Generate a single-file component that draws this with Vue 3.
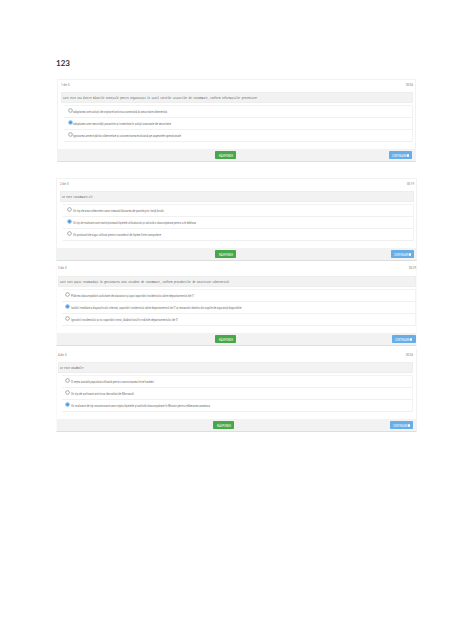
<script setup>
const cards = [
  {
    name: 'first', num: '1 din 5', time: '00:06', chosen: 1,
    question: 'Care este una dintre măsurile esențiale pentru organizații în cazul țintelor atacurilor de ransomware, conform informațiilor prezentate?', width: 194.5,
    options: [
      ['adoptarea unei soluții de criptare/antivirus conectată la securitate cibernetică', 94],
      ['adoptarea unei securități proactive și investirea în soluții avansate de securitate', 98],
      ['ignorarea amenințărilor cibernetice și concentrarea exclusivă pe aspectele operaționale', 108]
    ]
  },
  {
    name: 'second', num: '2 din 5', time: '00:19', chosen: 1,
    question: 'Ce este ransomware-ul?', width: 31,
    options: [
      ['Un tip de atac cibernetic care vizează blocarea de parole prin forță brută', 90.5],
      ['Un tip de malware care restricționează fișierele utilizatorului și solicită o răscumpărare pentru a le debloca', 123],
      ['Un protocol de sigur utilizat pentru transferul de fișiere între computere', 88]
    ]
  },
  {
    name: 'third', num: '3 din 5', time: '00:29', chosen: 1,
    question: 'Care sunt pașii recomandați în gestionarea unui incident de ransomware, conform procedurilor de securitate cibernetică?', width: 169.5,
    options: [
      ['Plătirea răscumpărării solicitate de atacatori și apoi raportării incidentului către departamentul de IT', 123],
      ['Izolării imediate a dispozitivului infectat, raportării incidentului către departamentul de IT și restaurării datelor din copiile de siguranță disponibile', 170.5],
      ['Ignorării incidentului și nu raportării nimic, lăsând totul în mâinile departamentului de IT', 107]
    ]
  },
  {
    name: 'fourth', num: '4 din 5', time: '00:36', chosen: 2,
    question: 'Ce este DeadBolt?', width: 24,
    options: [
      ['O rețea socială populară utilizată pentru comunicarea între hackeri', 83],
      ['Un tip de software antivirus dezvoltat de Microsoft', 63],
      ['Un malware de tip ransomware care cripta fișierele și solicită răscumpărare în Bitcoin pentru eliberarea acestora', 139]
    ]
  }
]
</script>

<template>
  <main class="page">
    <h1>123</h1>
    <section v-for="c in cards" :key="c.name" class="card" :class="c.name">
      <header>
        <svg class="line" width="9" height="5"><text x="0" y="3.8" textLength="8.5" lengthAdjust="spacingAndGlyphs">{{ c.num }}</text></svg>
        <svg class="line" width="7" height="5"><text x="0" y="3.8" textLength="7" lengthAdjust="spacingAndGlyphs">{{ c.time }}</text></svg>
      </header>
      <div class="question">
        <svg class="line mono" :width="c.width" height="5"><text x="0" y="3.7" :textLength="c.width" lengthAdjust="spacingAndGlyphs">{{ c.question }}</text></svg>
      </div>
      <ul>
        <li v-for="(o, i) in c.options" :key="i">
          <svg class="radio" :class="{ on: i === c.chosen }" width="5" height="5" viewBox="0 0 5 5">
            <circle class="ring" cx="2.5" cy="2.5" r="1.85" />
            <circle v-if="i === c.chosen" class="dot" cx="2.5" cy="2.5" r="1.3" />
          </svg>
          <svg class="line" :width="o[1]" height="5"><text x="0" y="3.8" :textLength="o[1]" lengthAdjust="spacingAndGlyphs">{{ o[0] }}</text></svg>
        </li>
      </ul>
      <footer>
        <span></span>
        <button class="answer"><svg class="line" width="14" height="5"><text x="0" y="3.6" textLength="14" lengthAdjust="spacingAndGlyphs">RĂSPUNDE</text></svg></button>
        <button class="next"><svg class="line" width="17" height="5"><text x="0" y="3.6" textLength="14.5" lengthAdjust="spacingAndGlyphs">CONTINUARE</text><rect x="15" y="1.2" width="2" height="2.6" rx=".4" /></svg></button>
      </footer>
    </section>
  </main>
</template>

<style>
body { margin: 0; background: #fff; }
</style>

<style scoped>
* { box-sizing: border-box; }
.page { width: 474px; height: 632px; padding: 58px 0 0 56px; overflow: hidden; font-family: Lato, "Open Sans", sans-serif; }
h1 { margin: 0; height: 10px; font-size: 8px; line-height: 10px; font-weight: 700; color: #333; }
svg { display: block; flex: none; overflow: visible; }
.line text { font-family: Roboto, "Noto Sans", sans-serif; font-size: 3px; fill: #707070; }
.mono text { font-family: "Liberation Mono", monospace; font-size: 3.4px; fill: #555; }
.card {
  display: flex; flex-direction: column; width: 360px; height: 83px;
  border: 1px solid #f2f2f2; border-bottom-color: #dedede;
}
.first { width: 359px; margin: 11px 0 0 1px; }
.second { width: 361px; margin-top: 16px; }
.third { width: 361px; height: 84px; margin-top: 1px; border-top-color: transparent; border-left-color: #fafafa; border-right-color: #fafafa; }
.fourth { width: 361px; height: 84px; margin-top: 2px; border-top-color: transparent; border-left-color: #fafafa; }
header { display: flex; justify-content: space-between; align-items: center; height: 12px; padding: 0 2px 4px 3px; }
.second header { padding-bottom: 3px; }
.third header { height: 13px; padding: 0 0 4px 1px; }
.fourth header { height: 13px; padding: 0 3px 3px 1px; }
header .line text { fill: #777; }
.question { display: flex; align-items: center; height: 11px; margin: 0 2px 0 3px; padding-left: 1px; background: #f2f2f2; border: 1px solid #ededed; flex: none; }
.third .question { margin: 0 0 0 .5px; }
.fourth .question { margin: 0 3px 0 .5px; }
ul { list-style: none; margin: 2px 2px 0 6px; padding: 0; border: 1px solid #f3f3f3; border-width: 1px 1px 0 0; flex: none; }
.third ul { margin: 2px 0 0 5px; }
.fourth ul { margin: 2px 3px 0 5px; }
li { display: flex; align-items: center; gap: 1px; height: 12px; padding: 0 0 2px 3.5px; border-bottom: 1px solid #f0f0f0; }
.second li { padding-left: 4px; }
.third li, .fourth li { padding-left: 3px; }
li .line { margin: 2px 0 0 -.5px; }
.ring { fill: #fff; stroke: #777; stroke-width: .6; }
.on .ring { stroke: #3189dc; }
.dot { fill: #3189dc; }
footer { display: grid; grid-template-columns: 157px 21px 1fr; align-items: center; height: 12px; margin-top: auto; padding-right: 3px; background: #f2f2f2; flex: none; }
.second footer { grid-template-columns: 158px 21px 1fr; padding-right: 2px; }
.third footer { grid-template-columns: 158px 21px 1fr; padding-right: .5px; }
.fourth footer { grid-template-columns: 156px 21px 1fr; padding-right: 3px; }
button { display: flex; align-items: center; justify-content: center; height: 8px; padding: 0; border: 0; border-radius: .8px; }
.answer { width: 21px; background: #47a84b; }
.next { width: 23.5px; justify-self: end; background: #67ade8; }
button .line text { font-size: 2.7px; fill: #fff; }
button rect { fill: #fff; }
</style>
